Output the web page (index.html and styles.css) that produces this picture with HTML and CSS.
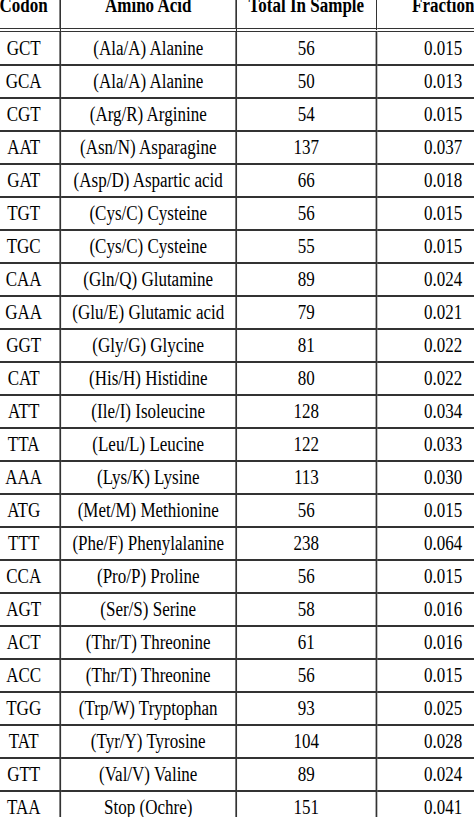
FILE: index.html
```html
<!DOCTYPE html>
<html lang="en">
<head>
<meta charset="utf-8">
<title>Codon usage</title>
<link rel="stylesheet" href="styles.css">
</head>
<body>
<div class="sheet">
<table class="codons">
<colgroup>
<col class="c-codon"><col class="c-amino"><col class="c-total"><col class="c-frac">
</colgroup>
<thead>
<tr><th>Codon</th><th>Amino Acid</th><th>Total In Sample</th><th>Fraction</th></tr>
</thead>
<tbody>
<tr><td>GCT</td><td>(Ala/A) Alanine</td><td>56</td><td>0.015</td></tr>
<tr><td>GCA</td><td>(Ala/A) Alanine</td><td>50</td><td>0.013</td></tr>
<tr><td>CGT</td><td>(Arg/R) Arginine</td><td>54</td><td>0.015</td></tr>
<tr><td>AAT</td><td>(Asn/N) Asparagine</td><td>137</td><td>0.037</td></tr>
<tr><td>GAT</td><td>(Asp/D) Aspartic acid</td><td>66</td><td>0.018</td></tr>
<tr><td>TGT</td><td>(Cys/C) Cysteine</td><td>56</td><td>0.015</td></tr>
<tr><td>TGC</td><td>(Cys/C) Cysteine</td><td>55</td><td>0.015</td></tr>
<tr><td>CAA</td><td>(Gln/Q) Glutamine</td><td>89</td><td>0.024</td></tr>
<tr><td>GAA</td><td>(Glu/E) Glutamic acid</td><td>79</td><td>0.021</td></tr>
<tr><td>GGT</td><td>(Gly/G) Glycine</td><td>81</td><td>0.022</td></tr>
<tr><td>CAT</td><td>(His/H) Histidine</td><td>80</td><td>0.022</td></tr>
<tr><td>ATT</td><td>(Ile/I) Isoleucine</td><td>128</td><td>0.034</td></tr>
<tr><td>TTA</td><td>(Leu/L) Leucine</td><td>122</td><td>0.033</td></tr>
<tr><td>AAA</td><td>(Lys/K) Lysine</td><td>113</td><td>0.030</td></tr>
<tr><td>ATG</td><td>(Met/M) Methionine</td><td>56</td><td>0.015</td></tr>
<tr><td>TTT</td><td>(Phe/F) Phenylalanine</td><td>238</td><td>0.064</td></tr>
<tr><td>CCA</td><td>(Pro/P) Proline</td><td>56</td><td>0.015</td></tr>
<tr><td>AGT</td><td>(Ser/S) Serine</td><td>58</td><td>0.016</td></tr>
<tr><td>ACT</td><td>(Thr/T) Threonine</td><td>61</td><td>0.016</td></tr>
<tr><td>ACC</td><td>(Thr/T) Threonine</td><td>56</td><td>0.015</td></tr>
<tr><td>TGG</td><td>(Trp/W) Tryptophan</td><td>93</td><td>0.025</td></tr>
<tr><td>TAT</td><td>(Tyr/Y) Tyrosine</td><td>104</td><td>0.028</td></tr>
<tr><td>GTT</td><td>(Val/V) Valine</td><td>89</td><td>0.024</td></tr>
<tr><td>TAA</td><td>Stop (Ochre)</td><td>151</td><td>0.041</td></tr>
</tbody>
</table>
</div>
</body>
</html>
```
FILE: styles.css
```css
html, body {
  margin: 0;
  padding: 0;
  background: #fff;
  overflow: hidden;
}
body {
  width: 474px;
  height: 817px;
  font-family: "Liberation Serif", "Times New Roman", serif;
  font-size: 20px;
  color: #000;
}
.sheet {
  margin: -6px 0 0 -12px;
}
/* the source table is horizontally condensed: lay out at full size, squeeze on x */
.codons {
  border-collapse: separate;
  border-spacing: 0;
  table-layout: fixed;
  width: 613px;
  transform: scaleX(0.85);
  transform-origin: 0 0;
}
.c-codon { width: 86px; }
.c-amino { width: 207px; }
.c-total { width: 165px; }
.c-frac { width: 155px; }
.codons th,
.codons td {
  box-sizing: border-box;
  padding: 0;
  text-align: center;
  white-space: nowrap;
  border-right: 2.35px solid #333;
}
.codons th:last-child,
.codons td:last-child {
  border-right: none;
}
.codons th {
  height: 38px;
  font-weight: bold;
  vertical-align: top;
  border-bottom: 4px double #333;
}
.codons td {
  height: 33px;
  vertical-align: middle;
  border-bottom: 2px solid #333;
}
.codons tbody tr:first-child td {
  height: 34px;
}
```
